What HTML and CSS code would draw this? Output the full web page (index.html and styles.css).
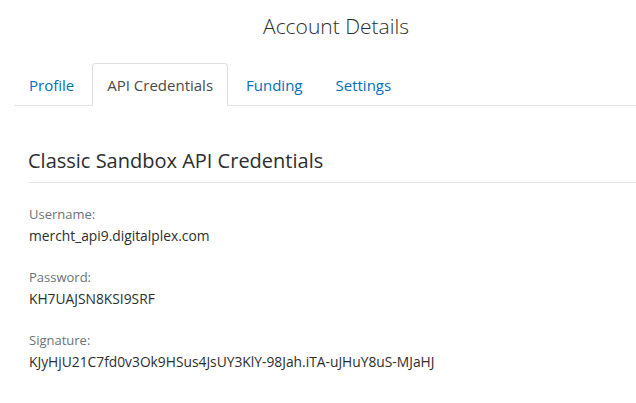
FILE: index.html
```html
<!DOCTYPE html>
<html>
<head>
<meta charset="utf-8">
<link rel="stylesheet" href="styles.css">
</head>
<body>
<div class="page">
  <h1 class="title">Account Details</h1>
  <nav class="tabs">
    <a class="tab">Profile</a>
    <a class="tab active">API Credentials</a>
    <a class="tab">Funding</a>
    <a class="tab">Settings</a>
  </nav>
  <section class="panel">
    <h2 class="heading">Classic Sandbox API Credentials</h2>
    <div class="field">
      <div class="label">Username:</div>
      <div class="value">mercht_api9.digitalplex.com</div>
    </div>
    <div class="field">
      <div class="label">Password:</div>
      <div class="value">KH7UAJSN8KSI9SRF</div>
    </div>
    <div class="field">
      <div class="label">Signature:</div>
      <div class="value">KJyHjU21C7fd0v3Ok9HSus4JsUY3KlY-98Jah.iTA-uJHuY8uS-MJaHJ</div>
    </div>
  </section>
</div>
</body>
</html>
```

FILE: styles.css
```css
* { box-sizing: border-box; }
html, body { margin: 0; padding: 0; background: #fff; }
body {
  font-family: "Open Sans", "Noto Sans", sans-serif;
  color: #2c2e2f;
  width: 636px;
  height: 403px;
  overflow: hidden;
}
.page { padding: 0 0 0 14px; }
.title {
  margin: 0;
  padding-top: 11px;
  height: 63px;
  text-align: center;
  font-weight: 300;
  font-size: 21px;
  line-height: 30px;
  color: #2c2e2f;
  padding-left: 22px;
}
.tabs {
  display: flex;
  border-bottom: 1px solid #e5e5e5;
  height: 43px;
}
.tab {
  display: block;
  padding: 0 14px;
  font-size: 15px;
  line-height: 42px;
  color: #0070ba;
  border: 1px solid transparent;
  border-bottom: none;
  border-radius: 4px 4px 0 0;
  margin-right: 3px;
}
.tab.active {
  color: #4a4a4a;
  background: #fff;
  border-color: #dedede;
  margin-bottom: -1px;
  height: 43px;
}
.panel { padding: 40px 0 0 15px; }
.heading {
  margin: 0;
  font-weight: 400;
  font-size: 20px;
  line-height: 30px;
  padding-bottom: 6px;
  border-bottom: 1px solid #e5e5e5;
  color: #2c2e2f;
  text-indent: -1px;
}
.field { margin-top: 20px; }
.field + .field { margin-top: 19px; }
.label {
  font-size: 13px;
  line-height: 22px;
  color: #6c7378;
}
.value {
  font-size: 13.8px;
  line-height: 22px;
  color: #2c2e2f;
}
```
